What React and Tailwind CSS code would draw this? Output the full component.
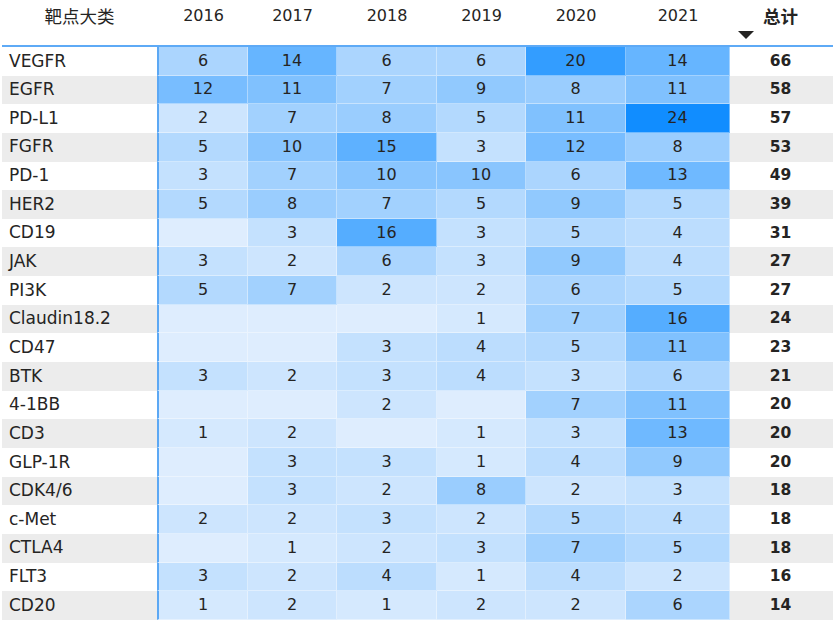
import React from "react";

const years = ["2016", "2017", "2018", "2019", "2020", "2021"];

const rows = [
  ["VEGFR", [6, 14, 6, 6, 20, 14], 66],
  ["EGFR", [12, 11, 7, 9, 8, 11], 58],
  ["PD-L1", [2, 7, 8, 5, 11, 24], 57],
  ["FGFR", [5, 10, 15, 3, 12, 8], 53],
  ["PD-1", [3, 7, 10, 10, 6, 13], 49],
  ["HER2", [5, 8, 7, 5, 9, 5], 39],
  ["CD19", [null, 3, 16, 3, 5, 4], 31],
  ["JAK", [3, 2, 6, 3, 9, 4], 27],
  ["PI3K", [5, 7, 2, 2, 6, 5], 27],
  ["Claudin18.2", [null, null, null, 1, 7, 16], 24],
  ["CD47", [null, null, 3, 4, 5, 11], 23],
  ["BTK", [3, 2, 3, 4, 3, 6], 21],
  ["4-1BB", [null, null, 2, null, 7, 11], 20],
  ["CD3", [1, 2, null, 1, 3, 13], 20],
  ["GLP-1R", [null, 3, 3, 1, 4, 9], 20],
  ["CDK4/6", [null, 3, 2, 8, 2, 3], 18],
  ["c-Met", [2, 2, 3, 2, 5, 4], 18],
  ["CTLA4", [null, 1, 2, 3, 7, 5], 18],
  ["FLT3", [3, 2, 4, 1, 4, 2], 16],
  ["CD20", [1, 2, 1, 2, 2, 6], 14],
];

// column widths of the six year columns
const colW = ["w-[91px]", "w-[89px]", "w-[100px]", "w-[89px]", "w-[100px]", "w-[104px]"];

// light blue -> #118dff, by value out of the max (24)
function heat(v) {
  const t = (v || 0) / 24;
  const from = [222, 237, 254];
  const to = [17, 141, 255];
  const c = from.map((f, i) => Math.round(f + (to[i] - f) * t));
  return `rgb(${c[0]}, ${c[1]}, ${c[2]})`;
}

function SortArrow() {
  return (
    <svg width="16" height="8" viewBox="0 0 16 8" className="ml-[8px] mt-[3px]">
      <polygon points="0,0 16,0 8,8" fill="#252423" />
    </svg>
  );
}

export default function App() {
  return (
    <div
      className="w-[833px] h-[622px] bg-white overflow-hidden text-[#252423]"
      style={{ fontFamily: '"DejaVu Sans", "Noto Sans CJK SC", sans-serif' }}
    >
      <div className="ml-[2px] flex flex-col">
        {/* header */}
        <div className="flex h-[47px] border-b-2 border-[#5eaaf6]">
          <div className="w-[155px] flex justify-center pt-[4px] text-[17.5px] leading-[24px] font-['Noto_Sans_CJK_SC',sans-serif]">
            靶点大类
          </div>
          {years.map((y, i) => (
            <div
              key={y}
              className={`${colW[i]} flex justify-center pt-[5px] text-[16px] leading-[22px] ${i === 0 ? "pl-[2px]" : ""}`}
            >
              {y}
            </div>
          ))}
          <div className="w-[101px] flex flex-col pt-[4px]">
            <div className="text-center text-[17.5px] leading-[24px] font-bold font-['Noto_Sans_CJK_SC',sans-serif]">
              总计
            </div>
            <SortArrow />
          </div>
        </div>

        {/* body */}
        {rows.map(([name, vals, total], r) => (
          <div
            key={name}
            className={`flex h-[28.65px] ${r % 2 ? "bg-[#ececec]" : "bg-white"}`}
          >
            <div className="w-[155px] flex items-center pl-[7px] text-[17px]">
              {name}
            </div>
            {vals.map((v, i) => (
              <div
                key={i}
                className={`${colW[i]} flex items-center justify-center text-[16px] border-r border-b border-white/40 ${
                  i === 0 ? "border-l-2 border-l-[#5ca8f4]" : ""
                }`}
                style={{ backgroundColor: heat(v) }}
              >
                {v ?? ""}
              </div>
            ))}
            <div className="w-[101px] flex items-center justify-center text-[15.5px] font-bold">
              {total}
            </div>
          </div>
        ))}
      </div>
    </div>
  );
}
